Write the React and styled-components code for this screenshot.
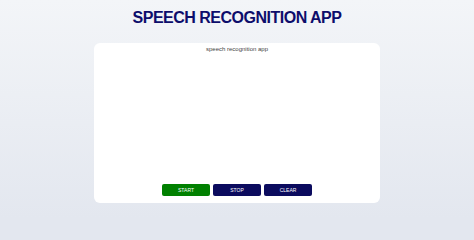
import React from "react";
import styled, { createGlobalStyle } from "styled-components";

const GlobalStyle = createGlobalStyle`
  html {
    background: #e3e7ef;
  }
  body {
    margin: 0;
    font-family: "Liberation Sans", Arial, sans-serif;
  }
`;

const Wrapper = styled.div`
  min-height: 218px;
  background: linear-gradient(180deg, #f3f5f8, #e3e7ef);
  display: flex;
  flex-direction: column;
  align-items: center;
  box-sizing: border-box;
  padding-top: 8px;
`;

const Title = styled.h1`
  margin: 0;
  height: 35px;
  font-size: 16px;
  line-height: 20px;
  letter-spacing: -0.5px;
  font-weight: 700;
  color: #0d0d6b;
`;

const Card = styled.div`
  width: 286px;
  height: 160px;
  background: #fff;
  border-radius: 6px;
  display: flex;
  flex-direction: column;
  align-items: center;
  box-sizing: border-box;
  padding: 2px 0 7px;
`;

const Caption = styled.p`
  margin: 0;
  font-size: 6px;
  line-height: 8px;
  color: #444;
  flex: 1;
`;

const ButtonRow = styled.div`
  display: flex;
  gap: 3px;
`;

const Button = styled.button`
  width: 48px;
  height: 12px;
  padding: 0;
  border: none;
  border-radius: 2px;
  background: ${(p) => p.$bg};
  color: #fff;
  font-family: "Liberation Sans", Arial, sans-serif;
  font-size: 5px;
  cursor: pointer;
`;

const App = () => {
  return (
    <Wrapper>
      <GlobalStyle />
      <Title>SPEECH RECOGNITION APP</Title>
      <Card>
        <Caption>speech recognition app</Caption>
        <ButtonRow>
          <Button $bg="#008000">START</Button>
          <Button $bg="#0b0b5e">STOP</Button>
          <Button $bg="#0b0b5e">CLEAR</Button>
        </ButtonRow>
      </Card>
    </Wrapper>
  );
};

export default App;
